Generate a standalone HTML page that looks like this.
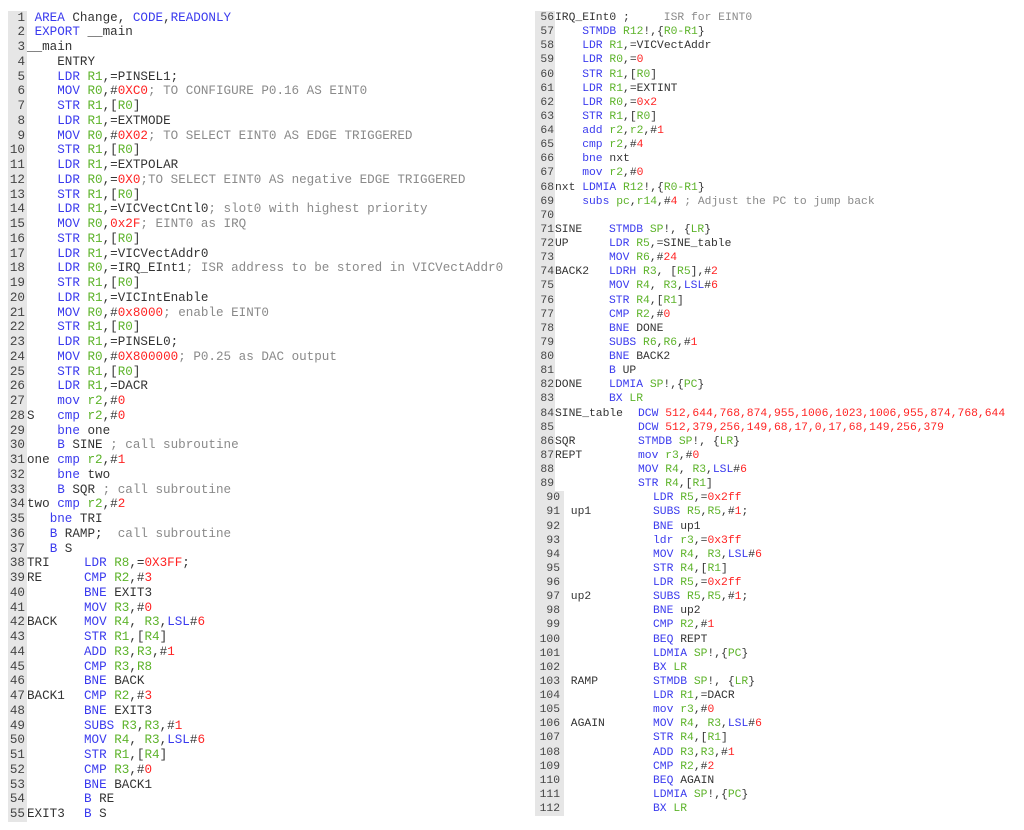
<!DOCTYPE html>
<html><head><meta charset="utf-8"><style>
body{margin:0;width:1024px;height:830px;background:#fff;overflow:hidden;position:relative;font-family:"Liberation Mono",monospace;color:#333;}
.p{position:absolute;}
.p div{position:relative;white-space:pre;}
#L{left:8px;top:10.6px;font-size:12.6px;line-height:14.76px;}
#L div{height:14.76px;}
#R{left:535px;top:11px;font-size:11.33px;line-height:14.14px;}
#R div{height:14.14px;}
.g{display:inline-block;background:#e6e6e6;text-align:right;color:#444;vertical-align:top;}
#L .g{width:17px;padding-right:2px;height:14.76px;}
#R .g{width:19px;padding-right:1px;height:14.14px;}
#R .w .g{width:25px;padding-right:4px;}
.lb{display:inline-block;vertical-align:top;}
.k{color:#3a3aee}.r{color:#5db32a}.n{color:#f22}.c{color:#8a8a8a}
</style></head><body>
<div class="p" id="L"><div><span class="g">1</span> <span class="k">AREA</span> Change, <span class="k">CODE</span>,<span class="k">READONLY</span></div><div><span class="g">2</span> <span class="k">EXPORT</span> __main</div><div><span class="g">3</span>__main</div><div><span class="g">4</span>    ENTRY</div><div><span class="g">5</span>    <span class="k">LDR</span> <span class="r">R1</span>,=PINSEL1;</div><div><span class="g">6</span>    <span class="k">MOV</span> <span class="r">R0</span>,#<span class="n">0XC0</span><span class="c">; TO CONFIGURE P0.16 AS EINT0</span></div><div><span class="g">7</span>    <span class="k">STR</span> <span class="r">R1</span>,[<span class="r">R0</span>]</div><div><span class="g">8</span>    <span class="k">LDR</span> <span class="r">R1</span>,=EXTMODE</div><div><span class="g">9</span>    <span class="k">MOV</span> <span class="r">R0</span>,#<span class="n">0X02</span><span class="c">; TO SELECT EINT0 AS EDGE TRIGGERED</span></div><div><span class="g">10</span>    <span class="k">STR</span> <span class="r">R1</span>,[<span class="r">R0</span>]</div><div><span class="g">11</span>    <span class="k">LDR</span> <span class="r">R1</span>,=EXTPOLAR</div><div><span class="g">12</span>    <span class="k">LDR</span> <span class="r">R0</span>,=<span class="n">0X0</span><span class="c">;TO SELECT EINT0 AS negative EDGE TRIGGERED</span></div><div><span class="g">13</span>    <span class="k">STR</span> <span class="r">R1</span>,[<span class="r">R0</span>]</div><div><span class="g">14</span>    <span class="k">LDR</span> <span class="r">R1</span>,=VICVectCntl0<span class="c">; slot0 with highest priority</span></div><div><span class="g">15</span>    <span class="k">MOV</span> <span class="r">R0</span>,<span class="n">0x2F</span><span class="c">; EINT0 as IRQ</span></div><div><span class="g">16</span>    <span class="k">STR</span> <span class="r">R1</span>,[<span class="r">R0</span>]</div><div><span class="g">17</span>    <span class="k">LDR</span> <span class="r">R1</span>,=VICVectAddr0</div><div><span class="g">18</span>    <span class="k">LDR</span> <span class="r">R0</span>,=IRQ_EInt1<span class="c">; ISR address to be stored in VICVectAddr0</span></div><div><span class="g">19</span>    <span class="k">STR</span> <span class="r">R1</span>,[<span class="r">R0</span>]</div><div><span class="g">20</span>    <span class="k">LDR</span> <span class="r">R1</span>,=VICIntEnable</div><div><span class="g">21</span>    <span class="k">MOV</span> <span class="r">R0</span>,#<span class="n">0x8000</span><span class="c">; enable EINT0</span></div><div><span class="g">22</span>    <span class="k">STR</span> <span class="r">R1</span>,[<span class="r">R0</span>]</div><div><span class="g">23</span>    <span class="k">LDR</span> <span class="r">R1</span>,=PINSEL0;</div><div><span class="g">24</span>    <span class="k">MOV</span> <span class="r">R0</span>,#<span class="n">0X800000</span><span class="c">; P0.25 as DAC output</span></div><div><span class="g">25</span>    <span class="k">STR</span> <span class="r">R1</span>,[<span class="r">R0</span>]</div><div><span class="g">26</span>    <span class="k">LDR</span> <span class="r">R1</span>,=DACR</div><div><span class="g">27</span>    <span class="k">mov</span> <span class="r">r2</span>,#<span class="n">0</span></div><div><span class="g">28</span>S   <span class="k">cmp</span> <span class="r">r2</span>,#<span class="n">0</span></div><div><span class="g">29</span>    <span class="k">bne</span> one</div><div><span class="g">30</span>    <span class="k">B</span> SINE <span class="c">; call subroutine</span></div><div><span class="g">31</span>one <span class="k">cmp</span> <span class="r">r2</span>,#<span class="n">1</span></div><div><span class="g">32</span>    <span class="k">bne</span> two</div><div><span class="g">33</span>    <span class="k">B</span> SQR <span class="c">; call subroutine</span></div><div><span class="g">34</span>two <span class="k">cmp</span> <span class="r">r2</span>,#<span class="n">2</span></div><div><span class="g">35</span>   <span class="k">bne</span> TRI</div><div><span class="g">36</span>   <span class="k">B</span> RAMP;  <span class="c">call subroutine</span></div><div><span class="g">37</span>   <span class="k">B</span> S</div><div><span class="g">38</span><span class="lb" style="width:57px">TRI</span><span class="k">LDR</span> <span class="r">R8</span>,=<span class="n">0X3FF</span>;</div><div><span class="g">39</span><span class="lb" style="width:57px">RE</span><span class="k">CMP</span> <span class="r">R2</span>,#<span class="n">3</span></div><div><span class="g">40</span><span class="lb" style="width:57px"></span><span class="k">BNE</span> EXIT3</div><div><span class="g">41</span><span class="lb" style="width:57px"></span><span class="k">MOV</span> <span class="r">R3</span>,#<span class="n">0</span></div><div><span class="g">42</span><span class="lb" style="width:57px">BACK</span><span class="k">MOV</span> <span class="r">R4</span>, <span class="r">R3</span>,<span class="k">LSL</span>#<span class="n">6</span></div><div><span class="g">43</span><span class="lb" style="width:57px"></span><span class="k">STR</span> <span class="r">R1</span>,[<span class="r">R4</span>]</div><div><span class="g">44</span><span class="lb" style="width:57px"></span><span class="k">ADD</span> <span class="r">R3</span>,<span class="r">R3</span>,#<span class="n">1</span></div><div><span class="g">45</span><span class="lb" style="width:57px"></span><span class="k">CMP</span> <span class="r">R3</span>,<span class="r">R8</span></div><div><span class="g">46</span><span class="lb" style="width:57px"></span><span class="k">BNE</span> BACK</div><div><span class="g">47</span><span class="lb" style="width:57px">BACK1</span><span class="k">CMP</span> <span class="r">R2</span>,#<span class="n">3</span></div><div><span class="g">48</span><span class="lb" style="width:57px"></span><span class="k">BNE</span> EXIT3</div><div><span class="g">49</span><span class="lb" style="width:57px"></span><span class="k">SUBS</span> <span class="r">R3</span>,<span class="r">R3</span>,#<span class="n">1</span></div><div><span class="g">50</span><span class="lb" style="width:57px"></span><span class="k">MOV</span> <span class="r">R4</span>, <span class="r">R3</span>,<span class="k">LSL</span>#<span class="n">6</span></div><div><span class="g">51</span><span class="lb" style="width:57px"></span><span class="k">STR</span> <span class="r">R1</span>,[<span class="r">R4</span>]</div><div><span class="g">52</span><span class="lb" style="width:57px"></span><span class="k">CMP</span> <span class="r">R3</span>,#<span class="n">0</span></div><div><span class="g">53</span><span class="lb" style="width:57px"></span><span class="k">BNE</span> BACK1</div><div><span class="g">54</span><span class="lb" style="width:57px"></span><span class="k">B</span> RE</div><div><span class="g">55</span><span class="lb" style="width:57px">EXIT3</span><span class="k">B</span> S</div></div>
<div class="p" id="R"><div><span class="g">56</span>IRQ_EInt0 ;     <span class="c">ISR for EINT0</span></div><div><span class="g">57</span>    <span class="k">STMDB</span> <span class="r">R12</span>!,{<span class="r">R0-R1</span>}</div><div><span class="g">58</span>    <span class="k">LDR</span> <span class="r">R1</span>,=VICVectAddr</div><div><span class="g">59</span>    <span class="k">LDR</span> <span class="r">R0</span>,=<span class="n">0</span></div><div><span class="g">60</span>    <span class="k">STR</span> <span class="r">R1</span>,[<span class="r">R0</span>]</div><div><span class="g">61</span>    <span class="k">LDR</span> <span class="r">R1</span>,=EXTINT</div><div><span class="g">62</span>    <span class="k">LDR</span> <span class="r">R0</span>,=<span class="n">0x2</span></div><div><span class="g">63</span>    <span class="k">STR</span> <span class="r">R1</span>,[<span class="r">R0</span>]</div><div><span class="g">64</span>    <span class="k">add</span> <span class="r">r2</span>,<span class="r">r2</span>,#<span class="n">1</span></div><div><span class="g">65</span>    <span class="k">cmp</span> <span class="r">r2</span>,#<span class="n">4</span></div><div><span class="g">66</span>    <span class="k">bne</span> nxt</div><div><span class="g">67</span>    <span class="k">mov</span> <span class="r">r2</span>,#<span class="n">0</span></div><div><span class="g">68</span>nxt <span class="k">LDMIA</span> <span class="r">R12</span>!,{<span class="r">R0-R1</span>}</div><div><span class="g">69</span>    <span class="k">subs</span> <span class="r">pc</span>,<span class="r">r14</span>,#<span class="n">4</span> <span class="c">; Adjust the PC to jump back</span></div><div><span class="g">70</span></div><div><span class="g">71</span><span class="lb" style="width:54px">SINE</span><span class="k">STMDB</span> <span class="r">SP</span>!, {<span class="r">LR</span>}</div><div><span class="g">72</span><span class="lb" style="width:54px">UP</span><span class="k">LDR</span> <span class="r">R5</span>,=SINE_table</div><div><span class="g">73</span><span class="lb" style="width:54px"></span><span class="k">MOV</span> <span class="r">R6</span>,#<span class="n">24</span></div><div><span class="g">74</span><span class="lb" style="width:54px">BACK2</span><span class="k">LDRH</span> <span class="r">R3</span>, [<span class="r">R5</span>],#<span class="n">2</span></div><div><span class="g">75</span><span class="lb" style="width:54px"></span><span class="k">MOV</span> <span class="r">R4</span>, <span class="r">R3</span>,<span class="k">LSL</span>#<span class="n">6</span></div><div><span class="g">76</span><span class="lb" style="width:54px"></span><span class="k">STR</span> <span class="r">R4</span>,[<span class="r">R1</span>]</div><div><span class="g">77</span><span class="lb" style="width:54px"></span><span class="k">CMP</span> <span class="r">R2</span>,#<span class="n">0</span></div><div><span class="g">78</span><span class="lb" style="width:54px"></span><span class="k">BNE</span> DONE</div><div><span class="g">79</span><span class="lb" style="width:54px"></span><span class="k">SUBS</span> <span class="r">R6</span>,<span class="r">R6</span>,#<span class="n">1</span></div><div><span class="g">80</span><span class="lb" style="width:54px"></span><span class="k">BNE</span> BACK2</div><div><span class="g">81</span><span class="lb" style="width:54px"></span><span class="k">B</span> UP</div><div><span class="g">82</span><span class="lb" style="width:54px">DONE</span><span class="k">LDMIA</span> <span class="r">SP</span>!,{<span class="r">PC</span>}</div><div><span class="g">83</span><span class="lb" style="width:54px"></span><span class="k">BX</span> <span class="r">LR</span></div><div><span class="g">84</span><span class="lb" style="width:83px">SINE_table</span><span class="k">DCW</span> <span class="n">512,644,768,874,955,1006,1023,1006,955,874,768,644</span></div><div><span class="g">85</span><span class="lb" style="width:83px"></span><span class="k">DCW</span> <span class="n">512,379,256,149,68,17,0,17,68,149,256,379</span></div><div><span class="g">86</span><span class="lb" style="width:83px">SQR</span><span class="k">STMDB</span> <span class="r">SP</span>!, {<span class="r">LR</span>}</div><div><span class="g">87</span><span class="lb" style="width:83px">REPT</span><span class="k">mov</span> <span class="r">r3</span>,#<span class="n">0</span></div><div><span class="g">88</span><span class="lb" style="width:83px"></span><span class="k">MOV</span> <span class="r">R4</span>, <span class="r">R3</span>,<span class="k">LSL</span>#<span class="n">6</span></div><div><span class="g">89</span><span class="lb" style="width:83px"></span><span class="k">STR</span> <span class="r">R4</span>,[<span class="r">R1</span>]</div><div class="w"><span class="g">90</span><span class="lb" style="width:89px"></span><span class="k">LDR</span> <span class="r">R5</span>,=<span class="n">0x2ff</span></div><div class="w"><span class="g">91</span><span class="lb" style="width:89px"> up1</span><span class="k">SUBS</span> <span class="r">R5</span>,<span class="r">R5</span>,#<span class="n">1</span>;</div><div class="w"><span class="g">92</span><span class="lb" style="width:89px"></span><span class="k">BNE</span> up1</div><div class="w"><span class="g">93</span><span class="lb" style="width:89px"></span><span class="k">ldr</span> <span class="r">r3</span>,=<span class="n">0x3ff</span></div><div class="w"><span class="g">94</span><span class="lb" style="width:89px"></span><span class="k">MOV</span> <span class="r">R4</span>, <span class="r">R3</span>,<span class="k">LSL</span>#<span class="n">6</span></div><div class="w"><span class="g">95</span><span class="lb" style="width:89px"></span><span class="k">STR</span> <span class="r">R4</span>,[<span class="r">R1</span>]</div><div class="w"><span class="g">96</span><span class="lb" style="width:89px"></span><span class="k">LDR</span> <span class="r">R5</span>,=<span class="n">0x2ff</span></div><div class="w"><span class="g">97</span><span class="lb" style="width:89px"> up2</span><span class="k">SUBS</span> <span class="r">R5</span>,<span class="r">R5</span>,#<span class="n">1</span>;</div><div class="w"><span class="g">98</span><span class="lb" style="width:89px"></span><span class="k">BNE</span> up2</div><div class="w"><span class="g">99</span><span class="lb" style="width:89px"></span><span class="k">CMP</span> <span class="r">R2</span>,#<span class="n">1</span></div><div class="w"><span class="g">100</span><span class="lb" style="width:89px"></span><span class="k">BEQ</span> REPT</div><div class="w"><span class="g">101</span><span class="lb" style="width:89px"></span><span class="k">LDMIA</span> <span class="r">SP</span>!,{<span class="r">PC</span>}</div><div class="w"><span class="g">102</span><span class="lb" style="width:89px"></span><span class="k">BX</span> <span class="r">LR</span></div><div class="w"><span class="g">103</span><span class="lb" style="width:89px"> RAMP</span><span class="k">STMDB</span> <span class="r">SP</span>!, {<span class="r">LR</span>}</div><div class="w"><span class="g">104</span><span class="lb" style="width:89px"></span><span class="k">LDR</span> <span class="r">R1</span>,=DACR</div><div class="w"><span class="g">105</span><span class="lb" style="width:89px"></span><span class="k">mov</span> <span class="r">r3</span>,#<span class="n">0</span></div><div class="w"><span class="g">106</span><span class="lb" style="width:89px"> AGAIN</span><span class="k">MOV</span> <span class="r">R4</span>, <span class="r">R3</span>,<span class="k">LSL</span>#<span class="n">6</span></div><div class="w"><span class="g">107</span><span class="lb" style="width:89px"></span><span class="k">STR</span> <span class="r">R4</span>,[<span class="r">R1</span>]</div><div class="w"><span class="g">108</span><span class="lb" style="width:89px"></span><span class="k">ADD</span> <span class="r">R3</span>,<span class="r">R3</span>,#<span class="n">1</span></div><div class="w"><span class="g">109</span><span class="lb" style="width:89px"></span><span class="k">CMP</span> <span class="r">R2</span>,#<span class="n">2</span></div><div class="w"><span class="g">110</span><span class="lb" style="width:89px"></span><span class="k">BEQ</span> AGAIN</div><div class="w"><span class="g">111</span><span class="lb" style="width:89px"></span><span class="k">LDMIA</span> <span class="r">SP</span>!,{<span class="r">PC</span>}</div><div class="w"><span class="g">112</span><span class="lb" style="width:89px"></span><span class="k">BX</span> <span class="r">LR</span></div></div>
</body></html>
